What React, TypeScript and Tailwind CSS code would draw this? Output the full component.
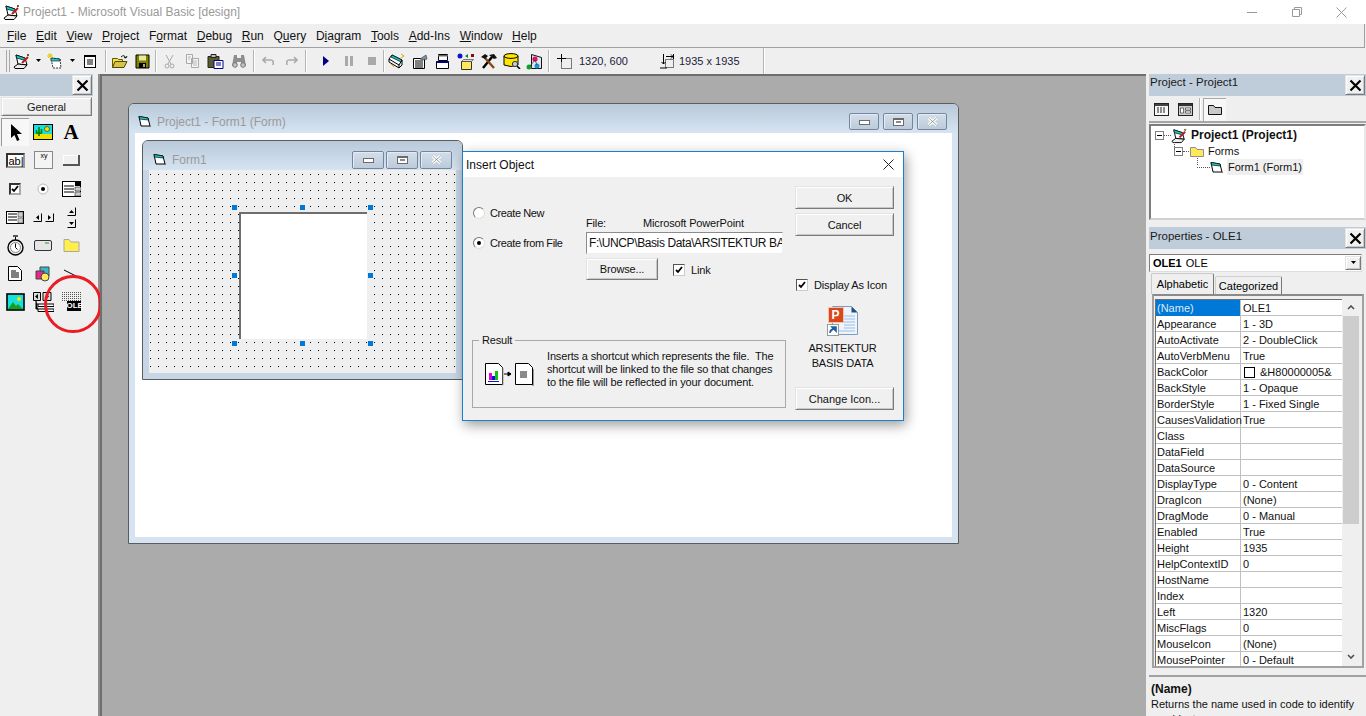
import type { ReactNode } from "react";

const raised =
  "bg-[#f0f0f0] border border-t-[#e3e3e3] border-l-[#e3e3e3] border-r-[#7a7a7a] border-b-[#7a7a7a] shadow-[inset_1px_1px_0_#fff,inset_-1px_-1px_0_#c8c8c8]";

const menus: [string, string, string][] = [
  ["", "F", "ile"],
  ["", "E", "dit"],
  ["", "V", "iew"],
  ["", "P", "roject"],
  ["F", "o", "rmat"],
  ["", "D", "ebug"],
  ["", "R", "un"],
  ["Q", "u", "ery"],
  ["D", "i", "agram"],
  ["", "T", "ools"],
  ["", "A", "dd-Ins"],
  ["", "W", "indow"],
  ["", "H", "elp"],
];

const props: [string, string][] = [
  ["(Name)", "OLE1"],
  ["Appearance", "1 - 3D"],
  ["AutoActivate", "2 - DoubleClick"],
  ["AutoVerbMenu", "True"],
  ["BackColor", "&H80000005&"],
  ["BackStyle", "1 - Opaque"],
  ["BorderStyle", "1 - Fixed Single"],
  ["CausesValidation", "True"],
  ["Class", ""],
  ["DataField", ""],
  ["DataSource", ""],
  ["DisplayType", "0 - Content"],
  ["DragIcon", "(None)"],
  ["DragMode", "0 - Manual"],
  ["Enabled", "True"],
  ["Height", "1935"],
  ["HelpContextID", "0"],
  ["HostName", ""],
  ["Index", ""],
  ["Left", "1320"],
  ["MiscFlags", "0"],
  ["MouseIcon", "(None)"],
  ["MousePointer", "0 - Default"],
];

function Ico({ w = 16, h = 16, children }: { w?: number; h?: number; children: ReactNode }) {
  return (
    <svg width={w} height={h} viewBox={`0 0 ${w} ${h}`} className="block shrink-0">
      {children}
    </svg>
  );
}

function FormIcon() {
  return (
    <Ico w={14} h={13}>
      <path d="M1 1.5 L10 3 L12 11 L3 11 Z" fill="#fff" stroke="#000" />
      <path d="M1 1.5 L10 3 L10.5 5 L1.5 4 Z" fill="#19d3d3" stroke="#000" strokeWidth=".7" />
      <path d="M13 11.5h-1" stroke="#777" />
    </Ico>
  );
}

function ProjectIcon({ size = 18 }: { size?: number }) {
  return (
    <svg width={size} height={size} viewBox="0 0 18 18" className="block shrink-0">
      <path d="M3 3 L12 6 L14 13 L5 12 Z" fill="#fff" stroke="#000" />
      <path d="M3 3 L12 6 L12.5 8.5 L3.5 6 Z" fill="#20c8c8" stroke="#000" strokeWidth=".7" />
      <path d="M1 15 L5 12 L14 13 L11 16.5 L2 16.5 Z" fill="#eee" stroke="#000" />
      <path d="M9 11 L15 5" stroke="#c01818" strokeWidth="2" />
      <path d="M15 2 l1 1 -1 1 -1-1z" fill="#ffe000" stroke="#000" strokeWidth=".6" />
    </svg>
  );
}

function Folder({ fill = "#ffe95a" }: { fill?: string }) {
  return (
    <Ico w={16} h={13}>
      <path d="M1.5 11.5V2.5h5l1.5 2h6.5v7z" fill={fill} stroke="#8f8f8f" />
    </Ico>
  );
}

function Tbtn({ w = 23, children }: { w?: number; children?: ReactNode }) {
  const cls = w === 23 ? "w-[23px]" : w === 24 ? "w-[24px]" : w === 26 ? "w-[26px]" : w === 28 ? "w-[28px]" : "w-[8px]";
  return <div className={`${cls} h-[22px] flex items-center justify-center shrink-0`}>{children}</div>;
}

function Sep({ cls }: { cls: string }) {
  return (
    <div className={`${cls} h-[22px] shrink-0 flex justify-center`}>
      <div className="w-[2px] h-full bg-[#b4b4b4] border-r border-white shrink-0" />
    </div>
  );
}

const Caret = () => (
  <Ico w={7} h={4}>
    <path d="M1 0h5L3.5 3z" fill="#000" />
  </Ico>
);

function ProjectExplorerIcon() {
  return (
    <Ico w={17} h={17}>
      <path d="M1 6l3-4 10 5-3 5z" fill="#fff" stroke="#000" />
      <path d="M4 2l10 5-1 2-10-5z" fill="#19c8c8" stroke="#000" strokeWidth=".7" />
      <path d="M1 6v3l10 6v-3M11 15l3-3V7" stroke="#000" fill="none" />
      <path d="M13 1l3 2-3 2M3 11l3 3" stroke="#e8a000" fill="none" />
    </Ico>
  );
}

function Toolbar() {
  return (
    <div className="h-[26px] bg-[#efefef] flex items-center pl-[6px] whitespace-nowrap shrink-0">
      <div className="w-[4px] h-[22px] border-x border-[#a8a8a8] shrink-0" />
      <Tbtn w={24}><ProjectIcon /></Tbtn>
      <Tbtn w={8}><Caret /></Tbtn>
      <Tbtn w={26}>
        <Ico w={17} h={17}>
          <path d="M4 5 L13 6 L14 15 L6 15 Z" fill="#fff" stroke="#333" strokeDasharray="2 1" />
          <path d="M4 5 L13 6 L13 8 L4 8 Z" fill="#1fd0d0" stroke="#000" strokeWidth=".6" />
          <path d="M3 0v5M0 3h6M1 1l4 4M5 1l-4 4" stroke="#e8c800" />
        </Ico>
      </Tbtn>
      <Tbtn w={8}><Caret /></Tbtn>
      <Tbtn w={28}>
        <Ico w={14} h={14}>
          <rect x="1.5" y="2.5" width="11" height="11" fill="#fff" stroke="#000" />
          <path d="M1 1h12v2H1z" fill="#000" />
          <path d="M4 6h6M4 8h6M4 10h6" stroke="#000" />
        </Ico>
      </Tbtn>
      <Sep cls="w-[4px]" />
      <Tbtn>
        <Ico w={17} h={15}>
          <path d="M1.5 13.5V4.5h5l1 1h4v2" fill="#ffe040" stroke="#5a5a00" />
          <path d="M1.5 13.5 L4 7.5 H16 L13 13.5 Z" fill="#d8c24a" stroke="#4a4a00" />
          <path d="M10 3 Q13 0 15 4 M15 4l1-2M15 4l-2-.5" stroke="#111" fill="none" />
        </Ico>
      </Tbtn>
      <Tbtn>
        <Ico w={15} h={15}>
          <path d="M1 1h13v13H1z" fill="#808000" stroke="#000" />
          <path d="M4 1.5h7v5H4z" fill="#e8e8a0" />
          <path d="M4 9h7v5H4z" fill="#000" />
          <path d="M8 10h2v3H8z" fill="#b0b060" />
        </Ico>
      </Tbtn>
      <Sep cls="w-[4px]" />
      <Tbtn>
        <Ico w={11} h={15}>
          <path d="M2 1l5 9M9 1L4 10" stroke="#a9a9a9" />
          <circle cx="3" cy="12" r="2" fill="none" stroke="#a9a9a9" />
          <circle cx="8" cy="12" r="2" fill="none" stroke="#a9a9a9" />
        </Ico>
      </Tbtn>
      <Tbtn>
        <Ico w={16} h={14}>
          <path d="M1.5.5h6v9h-6zM6.5 4.5h7v9h-7z" fill="#f4f4f4" stroke="#a9a9a9" />
          <path d="M8 7h4M8 9h4M8 11h4M3 3h3M3 5h2" stroke="#b8b8b8" />
        </Ico>
      </Tbtn>
      <Tbtn>
        <Ico w={17} h={15}>
          <path d="M1 2.5h11v11H1z" fill="#5a5a2a" stroke="#222" />
          <path d="M4 .5h5v3H4z" fill="#bbb" stroke="#222" />
          <path d="M7 6.5h9v8H7z" fill="#fff" stroke="#00008b" />
          <path d="M9 9h5M9 11h5" stroke="#00008b" />
        </Ico>
      </Tbtn>
      <Tbtn>
        <Ico w={16} h={14}>
          <path d="M3 1h3v3h4V1h3l2 11H10V8H6v4H1z" fill="#8e8e8e" />
          <circle cx="4" cy="11" r="2.3" fill="#c4c4c4" stroke="#777" />
          <circle cx="12" cy="11" r="2.3" fill="#c4c4c4" stroke="#777" />
        </Ico>
      </Tbtn>
      <Sep cls="w-[7px]" />
      <Tbtn>
        <Ico w={13} h={10}>
          <path d="M4 1L1 4l3 3M1 4h8q3 0 2 5" stroke="#aaa" strokeWidth="1.6" fill="none" />
        </Ico>
      </Tbtn>
      <Tbtn>
        <Ico w={13} h={10}>
          <path d="M9 1l3 3-3 3M12 4H4Q1 4 2 9" stroke="#aaa" strokeWidth="1.6" fill="none" />
        </Ico>
      </Tbtn>
      <Sep cls="w-[5px]" />
      <div className="w-[6px] shrink-0" />
      <Tbtn>
        <Ico w={6} h={10}>
          <path d="M0 0l6 5-6 5z" fill="#000080" />
        </Ico>
      </Tbtn>
      <Tbtn>
        <Ico w={8} h={10}>
          <path d="M0 0h3v10H0zM5 0h3v10H5z" fill="#a9a9a9" />
        </Ico>
      </Tbtn>
      <Tbtn>
        <div className="w-[8px] h-[8px] bg-[#a9a9a9]" />
      </Tbtn>
      <Sep cls="w-[2px]" />
      <Tbtn><ProjectExplorerIcon /></Tbtn>
      <Tbtn>
        <Ico w={16} h={15}>
          <path d="M1.5 4.5h11v10h-11z" fill="#fff" stroke="#000" />
          <path d="M3 7h8M3 9h8M3 11h8M3 13h8" stroke="#000" />
          <path d="M8 5l6-4 1 4-4 1z" fill="#7c8fa6" stroke="#333" strokeWidth=".6" />
        </Ico>
      </Tbtn>
      <Tbtn>
        <Ico w={15} h={15}>
          <path d="M3.5.5h9v6h-9z" fill="#fff" stroke="#000" />
          <path d="M3 1h10v1.5H3z" fill="#666" />
          <path d="M1.5 7.5h12v7h-12z" fill="#fff" stroke="#000" />
          <path d="M1.5 7h12v2h-12z" fill="#000080" />
        </Ico>
      </Tbtn>
      <Tbtn>
        <Ico w={17} h={17}>
          <circle cx="3" cy="3" r="2.5" fill="#1010d0" />
          <path d="M14 1h3v3h-3z" fill="#801010" />
          <path d="M8 3l3-2v4z" fill="#208020" />
          <path d="M4.5 8.5h10v8h-10z" fill="#ffe95a" stroke="#333" />
          <path d="M4.5 8.5l2-2h10l-2 2z" fill="#ddd" stroke="#333" strokeWidth=".6" />
        </Ico>
      </Tbtn>
      <Tbtn>
        <Ico w={17} h={16}>
          <path d="M3 15L12 4" stroke="#000" strokeWidth="2.4" />
          <path d="M14 15L5 5" stroke="#8b4513" strokeWidth="2.4" />
          <path d="M1 4l4-3 3 2-3 3zM9 2l5-1 3 4-3 1z" fill="#111" />
        </Ico>
      </Tbtn>
      <Tbtn>
        <Ico w={18} h={16}>
          <path d="M1 3v9q7 3 14 0V3z" fill="#ffe600" stroke="#000" />
          <ellipse cx="8" cy="3" rx="7" ry="2.4" fill="#ffe600" stroke="#000" />
          <circle cx="12" cy="11" r="2.6" fill="#ccc" stroke="#333" />
          <path d="M14 13l3 3" stroke="#000" strokeWidth="1.6" />
        </Ico>
      </Tbtn>
      <Tbtn>
        <Ico w={17} h={17}>
          <path d="M5.5 1.5l10 3v11h-10z" fill="#dfe6ee" stroke="#111" />
          <circle cx="9" cy="6" r="2.6" fill="#e0106a" />
          <circle cx="3" cy="14" r="2.5" fill="#10a030" />
          <circle cx="11" cy="13" r="2.5" fill="#2090d0" />
          <path d="M9 7L4 13M9 7l2 5" stroke="#333" strokeWidth=".7" />
        </Ico>
      </Tbtn>
      <Sep cls="w-[6px]" />
      <Tbtn w={24}>
        <Ico w={16} h={15}>
          <path d="M5.5 0v8M1 4.5h9" stroke="#000" />
          <rect x="5.5" y="4.5" width="10" height="10" fill="none" stroke="#000" strokeDasharray="1 1" />
        </Ico>
      </Tbtn>
      <span className="ml-[3px] w-[75px] text-[11px] text-[#1c1c3c]">1320, 600</span>
      <Tbtn w={24}>
        <Ico w={16} h={16}>
          <path d="M5.5 1v10M2 15h7M5.5 11l-2-2M5.5 11l2-2" stroke="#000" />
          <path d="M8 3.5h7M15 3.5l-2-2M15 3.5l-2 2M15.5 1v5" stroke="#000" />
          <rect x="7.5" y="6.5" width="8" height="8" fill="none" stroke="#000" strokeDasharray="1 1" />
        </Ico>
      </Tbtn>
      <span className="ml-[1px] w-[84px] text-[11px] text-[#1c1c3c]">1935 x 1935</span>
      <div className="w-[2px] h-[26px] bg-[#b4b4b4] border-r border-white" />
    </div>
  );
}

function CloseBox() {
  return (
    <div className={`${raised} w-[20px] h-[20px] flex items-center justify-center shrink-0`}>
      <Ico w={13} h={13}>
        <path d="M1.5 1.5l10 10M11.5 1.5l-10 10" stroke="#000" strokeWidth="2.2" />
      </Ico>
    </div>
  );
}

function Toolbox() {
  const cells: ReactNode[] = [
    <Ico w={12} h={17}><path d="M1 0v14l3.5-3 2.5 6 2.5-1-2.5-6H12z" fill="#000" /></Ico>,
    <Ico w={20} h={16}>
      <rect x=".5" y=".5" width="19" height="15" fill="#19e0e0" stroke="#000" />
      <circle cx="14" cy="5" r="2.5" fill="#ffe000" stroke="#000" strokeWidth=".5" />
      <path d="M1 10h18v5H1z" fill="#f0e000" />
      <path d="M6 3v9M3.5 6v3h5V5" stroke="#008000" strokeWidth="1.6" fill="none" />
    </Ico>,
    <span className="font-['Liberation_Serif',serif] font-bold text-[21px] leading-none text-black">A</span>,
    <div className="w-[19px] h-[15px] border-2 border-[#333] border-r-[#999] border-b-[#999] bg-white text-[11px] leading-[12px] pl-[1px] text-black whitespace-nowrap">ab|</div>,
    <div className="w-[19px] h-[18px] border border-[#8a8a8a] bg-[#f4f4f4] text-[7px] leading-[7px] pl-[6px] text-black">xy</div>,
    <div className="w-[17px] h-[11px] bg-[#f0f0f0] border-r-2 border-b-2 border-[#555] shadow-[inset_1px_1px_0_#fff]" />,
    <div className="w-[12px] h-[12px] border-2 border-[#333] border-r-[#aaa] border-b-[#aaa] bg-white flex items-center justify-center">
      <Ico w={8} h={8}><path d="M1 4l2 2 4-5" stroke="#000" strokeWidth="1.8" fill="none" /></Ico>
    </div>,
    <Ico w={12} h={12}><circle cx="6" cy="6" r="5" fill="#fff" stroke="#bbb" /><circle cx="6" cy="6" r="2" fill="#000" /></Ico>,
    <Ico w={19} h={16}>
      <rect x=".5" y=".5" width="18" height="15" fill="#fff" stroke="#000" />
      <path d="M2 5h10M2 8h10M2 11h10" stroke="#000" />
      <path d="M13 0h6v5h-6z" fill="#000" />
      <path d="M13 6h6v4h-6zM13 11h6v4h-6z" fill="#ccc" stroke="#000" strokeWidth=".5" />
    </Ico>,
    <Ico w={18} h={13}>
      <rect x=".5" y=".5" width="17" height="12" fill="#fff" stroke="#000" />
      <path d="M2 3h9M2 6h9M2 9h9" stroke="#000" />
      <path d="M12 1h5v5h-5zM12 7h5v5h-5z" fill="#ccc" stroke="#333" strokeWidth=".5" />
    </Ico>,
    <Ico w={21} h={9}>
      <path d="M.5.5h8v8h-8zM12.5.5h8v8h-8z" fill="#eee" />
      <path d="M8.5.5v8h-8M20.5.5v8h-8" stroke="#000" fill="none" />
      <path d="M6 2v5L3 4.5zM15 2v5l3-2.5z" fill="#000" />
    </Ico>,
    <Ico w={9} h={21}>
      <path d="M.5.5h8v8h-8zM.5 12.5h8v8h-8z" fill="#eee" />
      <path d="M8.5.5v8h-8M8.5 12.5v8h-8" stroke="#000" fill="none" />
      <path d="M2 6h5L4.5 3zM2 15h5l-2.5 3z" fill="#000" />
    </Ico>,
    <Ico w={17} h={22}>
      <circle cx="8.5" cy="13.5" r="7.5" fill="#eee" stroke="#000" strokeWidth="1.4" />
      <circle cx="8.5" cy="13.5" r="5" fill="#fff" stroke="#888" />
      <path d="M8.5 13.5V9.5M8.5 13.5l2 2" stroke="#000" />
      <path d="M6 1h5v2H6z" fill="#555" />
      <path d="M8.5 3v3" stroke="#000" />
    </Ico>,
    <Ico w={18} h={11}>
      <rect x=".5" y=".5" width="17" height="10" rx="1.5" fill="#e6e6e6" stroke="#333" />
      <path d="M11 3h4" stroke="#10a030" />
    </Ico>,
    <Ico w={17} h={15}>
      <path d="M1 13.5V1.5h5l2 2.5h8v9.5z" fill="#ffef4a" stroke="#a8a8a8" />
    </Ico>,
    <Ico w={14} h={15}>
      <path d="M.5.5h9l4 4v10H.5z" fill="#fff" stroke="#000" />
      <path d="M3 5h5M3 7h8M3 9h8M3 11h8" stroke="#000" />
    </Ico>,
    <Ico w={17} h={16}>
      <path d="M5 1h9v9H5z" fill="#39b8cc" stroke="#444" />
      <path d="M1 5h8v8H1z" fill="#e4288c" stroke="#444" />
      <circle cx="10" cy="11" r="4" fill="#ffe95a" stroke="#444" />
    </Ico>,
    <Ico w={16} h={9}><path d="M1 1l14 7" stroke="#000" /></Ico>,
    <Ico w={19} h={18}>
      <rect x="1" y="1" width="17" height="16" fill="#18e0e0" stroke="#000" strokeWidth="1.6" />
      <circle cx="13" cy="6" r="2" fill="#ffe000" />
      <path d="M2 16l5-7 3 4 2-2 5 5z" fill="#18a018" />
    </Ico>,
    <Ico w={21} h={20}>
      <path d="M.5.5h7v8h-7zM10 .5h8v8h-8z" fill="#ddd" stroke="#000" />
      <path d="M5 2v5L2 4.5zM13 2v5l3-2.5z" fill="#000" />
      <path d="M5 12h16v2.5H5zM5 17h16v2.5H5z" fill="#fff" stroke="#000" />
      <path d="M3 8v9h2M3 12h2" stroke="#000" />
    </Ico>,
    <div className="flex flex-col items-end w-[19px] h-[19px]">
      <div className="w-full h-[9px] bg-[conic-gradient(at_1px_1px,transparent_75%,#555_0)] bg-[size:2px_2px]" />
      <div className="w-[14px] h-[10px] bg-black text-white text-[8px] leading-[10px] font-bold text-center whitespace-nowrap">OLE</div>
    </div>,
  ];
  return (
    <div className="relative w-[100px] shrink-0 h-full bg-[#efefef] border-r-2 border-[#8e8e8e]">
      <div className="w-[93px] h-[22px] bg-[#bfcddb] flex justify-end items-center pr-[1px]">
        <CloseBox />
      </div>
      <div className={`${raised} ml-[1px] mt-[1px] w-[91px] h-[19px] flex items-center justify-center text-[11px] text-[#1a1a1a]`}>General</div>
      <div className="grid grid-cols-[28px_28px_28px] auto-rows-[28.3px] pl-[1px] pt-[2px]">
        {cells.map((c, i) => (
          <div
            key={i}
            className={`flex items-center justify-center ${i === 0 ? "bg-[#f7f7f7] border-l border-t border-[#999]" : ""}`}
          >
            {c}
          </div>
        ))}
      </div>
      {/* red marker round the OLE tool */}
      <div className="absolute left-[44px] top-[201px] w-[58px] h-[58px] rounded-full border-[3px] border-[#ea1c24]" />
    </div>
  );
}

function WinBtn({ big, kind }: { big?: boolean; kind: "min" | "max" | "close" }) {
  return (
    <div
      className={`${big ? "w-[32px] h-[18px]" : "w-[30px] h-[17px]"} rounded-[2px] border border-[#76859a] bg-gradient-to-b from-[#d3deea] to-[#bccada] shadow-[inset_1px_1px_0_#e4ebf2] flex items-center justify-center`}
    >
      {kind === "min" && <div className="w-[11px] h-[5px] bg-white border border-[#6b6b6b] mt-[2px]" />}
      {kind === "max" && <div className="w-[11px] h-[8px] bg-white border border-[#6b6b6b] border-t-2 flex items-center justify-center"><div className="w-[5px] h-[2px] bg-[#8a8a8a]" /></div>}
      {kind === "close" && (
        <Ico w={11} h={9}>
          <path d="M1.5 1l8 7M9.5 1l-8 7" stroke="#fff" strokeWidth="3" />
          <path d="M1.5 1l8 7M9.5 1l-8 7" stroke="#7a7a7a" strokeWidth=".7" />
        </Ico>
      )}
    </div>
  );
}

function MdiTitle({ title, big, cls }: { title: string; big?: boolean; cls: string }) {
  return (
    <div className={`${cls} flex items-center rounded-t-[5px] bg-gradient-to-b from-[#b9c9d9] to-[#d6e4f2]`}>
      <FormIcon />
      <span className="ml-[5px] text-[#9a9a9a] flex-1">{title}</span>
      <div className={`flex ${big ? "gap-[2px]" : "gap-[4px]"}`}>
        <WinBtn big={big} kind="min" />
        <WinBtn big={big} kind="max" />
        <WinBtn big={big} kind="close" />
      </div>
    </div>
  );
}

function Handle({ cls }: { cls: string }) {
  return <div className={`absolute w-[5px] h-[5px] bg-[#0078d7] ${cls}`} />;
}

function Check({ label, cls }: { label: string; cls: string }) {
  return (
    <div className={`${cls} flex items-center gap-[6px] whitespace-nowrap`}>
      <div className="w-[12px] h-[12px] bg-white border border-[#555] border-r-[#ccc] border-b-[#ccc] flex items-center justify-center shrink-0">
        <Ico w={8} h={8}><path d="M1 4l2 2 4-5" stroke="#000" strokeWidth="1.8" fill="none" /></Ico>
      </div>
      <span>{label}</span>
    </div>
  );
}

function Radio({ label, on, cls }: { label: string; on?: boolean; cls: string }) {
  return (
    <div className={`${cls} flex items-center gap-[5px] whitespace-nowrap tracking-[-0.4px]`}>
      <div className="w-[12px] h-[12px] rounded-full bg-white border border-[#777] border-r-[#ddd] border-b-[#ddd] flex items-center justify-center shrink-0">
        {on && <div className="w-[4px] h-[4px] rounded-full bg-black" />}
      </div>
      <span>{label}</span>
    </div>
  );
}

function DialogBtn({ cls, children }: { cls: string; children: ReactNode }) {
  return <div className={`${raised} ${cls} flex items-center justify-center`}>{children}</div>;
}

function PptIcon() {
  return (
    <div className="relative w-[32px] h-[31px]">
      <Ico w={32} h={31}>
        <path d="M5.5 1.5h19l6 6v22h-25z" fill="#eef4fb" stroke="#7d9cc0" />
        <path d="M24.5 1.5v6h6z" fill="#234f80" />
        <path d="M17 11h11M17 14h11M17 17h11M17 20h11M17 23h11M12 26h16" stroke="#9cc0e4" />
      </Ico>
      <div className="absolute left-[1px] top-[2px] w-[16px] h-[16px] bg-[#d9481c] border border-[#f5c3a8] text-white font-bold text-[12px] leading-[14px] text-center">P</div>
      <div className="absolute left-0 bottom-0 w-[12px] h-[12px] bg-white border border-[#999] flex items-center justify-center">
        <Ico w={8} h={8}><path d="M1 7q0-4 4-4M3 1h4v4z" stroke="#1f5fa8" strokeWidth="1.6" fill="#1f5fa8" /></Ico>
      </div>
    </div>
  );
}

function InsertObject() {
  return (
    <div className="absolute left-[360px] top-[75px] w-[442px] h-[270px] bg-[#f0f0f0] border border-[#1b7fcc] shadow-[2px_4px_12px_rgba(0,0,0,0.4)] flex flex-col text-[#111] text-[11px] tracking-[-0.15px]">
      <div className="h-[25px] bg-white flex items-center justify-between pl-[3px] pr-[9px] shrink-0">
        <span className="text-[12px] tracking-normal">Insert Object</span>
        <Ico w={11} h={11}><path d="M.5.5l10 10M10.5.5l-10 10" stroke="#222" /></Ico>
      </div>
      <div className="flex flex-1">
        <div className="w-[332px] pl-[9px] shrink-0 flex flex-col">
          <div className="flex h-[161px]">
            <div className="w-[114px] pl-[1px] pt-[28px]">
              <Radio label="Create New" cls="h-[16px]" />
              <Radio on label="Create from File" cls="h-[16px] mt-[14px]" />
            </div>
            <div className="w-[200px] pt-[38px]">
              <div className="flex h-[16px] items-center">
                <span className="w-[57px]">File:</span>
                <span>Microsoft PowerPoint</span>
              </div>
              <div className="w-[197px] h-[22px] mt-[1px] bg-white border border-[#8c8c8c] border-r-[#eee] border-b-[#eee] pl-[2px] flex items-center overflow-hidden whitespace-nowrap text-[12px] tracking-[-0.4px]">
                F:\UNCP\Basis Data\ARSITEKTUR BA
              </div>
              <div className="flex items-center mt-[4px]">
                <DialogBtn cls="w-[72px] h-[22px]">Browse...</DialogBtn>
                <Check label="Link" cls="ml-[15px] mt-[1px]" />
              </div>
            </div>
          </div>
          {/* group box */}
          <div className="relative w-[314px] h-[68px] mt-[2px] border border-[#a8a8a8] flex items-start pt-[9px]">
            <span className="absolute left-[6px] -top-[9px] bg-[#f0f0f0] px-[3px] leading-[16px]">Result</span>
            <div className="ml-[11px] mt-[12px] w-[63px] shrink-0">
              <Ico w={52} h={24}>
                <path d="M1.5 1.5h13l4 4v17h-17z" fill="#fff" stroke="#000" />
                <path d="M18 23h1V6" stroke="#999" />
                <path d="M5 18V11h3v7z" fill="#e000e0" />
                <path d="M8 18V14h3v4z" fill="#1010e0" />
                <path d="M11 18V9h3v9z" fill="#10c010" />
                <path d="M4 19.5h11" stroke="#1010e0" />
                <path d="M20 12h7M27 12l-3-2v4z" stroke="#000" fill="#000" />
                <path d="M31.5 1.5h13l4 4v17h-17z" fill="#fff" stroke="#000" />
                <path d="M48.5 23.5h1V7" stroke="#999" />
                <rect x="36" y="9" width="7" height="7" fill="#8a8a8a" />
              </Ico>
            </div>
            <div className="leading-[13px] whitespace-nowrap">
              <div>Inserts a shortcut which represents the file.&nbsp; The</div>
              <div>shortcut will be linked to the file so that changes</div>
              <div>to the file will be reflected in your document.</div>
            </div>
          </div>
        </div>
        <div className="w-[99px] shrink-0 flex flex-col">
          <DialogBtn cls="h-[23px] mt-[9px]">OK</DialogBtn>
          <DialogBtn cls="h-[23px] mt-[4px]">Cancel</DialogBtn>
          <Check label="Display As Icon" cls="mt-[41px] ml-[1px] h-[16px]" />
          <div className="flex justify-center mt-[12px] pr-[4px]">
            <PptIcon />
          </div>
          <div className="text-center leading-[15px] mt-[5px] pr-[4px]">
            <div>ARSITEKTUR</div>
            <div>BASIS DATA</div>
          </div>
          <DialogBtn cls="h-[23px] mt-[16px] tracking-normal">Change Icon...</DialogBtn>
        </div>
      </div>
    </div>
  );
}

function ExpBox() {
  return (
    <div className="w-[9px] h-[9px] border border-[#808080] bg-white flex items-center justify-center shrink-0">
      <div className="w-[5px] h-[1px] bg-black" />
    </div>
  );
}

function ProjectPanel() {
  return (
    <div className="flex flex-col">
      <div className="h-[22px] bg-[#bfcddb] flex items-start justify-between pl-[1px] pr-[1px]">
        <span className="text-[#1a1a1a] text-[11.5px]">Project - Project1</span>
        <div className="mt-[1px]"><CloseBox /></div>
      </div>
      <div className="h-[26px] mt-[1px] flex items-center border-b-2 border-[#a6a6a6]">
        <div className="w-[24px] flex justify-center">
          <Ico w={15} h={13}>
            <rect x=".5" y=".5" width="14" height="12" fill="#f8f8f8" stroke="#222" />
            <path d="M1 1h13v2H1z" fill="#444" />
            <path d="M3 5h9M3 7h9M3 9h9" stroke="#222" strokeDasharray="2 1" />
          </Ico>
        </div>
        <div className="w-[24px] flex justify-center">
          <Ico w={15} h={13}>
            <rect x=".5" y=".5" width="14" height="12" fill="#ccc" stroke="#222" />
            <path d="M1 1h13v2H1z" fill="#333" />
            <path d="M2.5 5h3v5h-3zM7.5 5h5v2h-5zM7.5 8h5v2h-5z" fill="#fff" stroke="#222" strokeWidth=".6" />
          </Ico>
        </div>
        <div className="ml-[2px] w-[2px] h-[22px] bg-[#b4b4b4] border-r border-white" />
        <div className="ml-[2px] w-[23px] h-[23px] bg-[#f7f7f7] border-l border-t border-[#aaa] flex items-center justify-center">
          <Ico w={16} h={13}>
            <path d="M1.5 11.5V2.5h5l1.5 2h6.5v7z" fill="#c9c9c9" stroke="#111" />
          </Ico>
        </div>
      </div>
      <div className="relative h-[96px] mt-[1px] bg-white border-2 border-[#7e7e7e] border-r-[#e8e8e8] border-b-[#d0d0d0] pt-[1px] pl-[4px] leading-[16px] text-[#111] text-[11px] whitespace-nowrap">
        <div className="flex items-center h-[16px]">
          <ExpBox />
          <div className="w-[7px] border-t border-dotted border-[#555]" />
          <ProjectIcon size={17} />
          <span className="ml-[3px] font-bold text-[12px]">Project1 (Project1)</span>
        </div>
        <div className="flex items-center h-[16px] pl-[19px]">
          <ExpBox />
          <div className="w-[6px] border-t border-dotted border-[#555]" />
          <Folder />
          <span className="ml-[3px]">Forms</span>
        </div>
        <div className="flex items-center h-[16px] pl-[42px]">
          <div className="w-[13px] border-t border-dotted border-[#555]" />
          <FormIcon />
          <span className="ml-[3px] bg-[#efefef] px-[1px]">Form1 (Form1)</span>
        </div>
        <div className="absolute left-[23px] top-[16px] h-[7px] border-l border-dotted border-[#555]" />
        <div className="absolute left-[46px] top-[32px] h-[7px] border-l border-dotted border-[#555]" />
      </div>
    </div>
  );
}

function PropertiesPanel() {
  return (
    <div className="flex flex-col mt-[7px] text-[11px]">
      <div className="h-[22px] bg-[#bfcddb] flex items-start justify-between pl-[1px] pr-[1px]">
        <span className="mt-[1px] text-[#1a1a1a] text-[11.5px]">Properties - OLE1</span>
        <div className="mt-[1px]"><CloseBox /></div>
      </div>
      <div className="h-[18px] mt-[5px] w-[213px] bg-white border border-[#7e7e7e] border-r-[#ddd] border-b-[#ddd] flex items-center pl-[3px]">
        <b className="font-bold">OLE1</b>
        <span className="ml-[4px] flex-1">OLE</span>
        <div className={`${raised} w-[16px] h-[14px] flex items-center justify-center`}><Caret /></div>
      </div>
      <div className="h-[22px] flex items-end pl-[2px] whitespace-nowrap">
        <div className="h-[21px] w-[63px] bg-[#efefef] border border-b-0 border-[#c9c9c9] border-r-[#777] flex items-center justify-center rounded-t-[2px]">Alphabetic</div>
        <div className="ml-[1px] h-[18px] w-[67px] bg-[#efefef] border border-b-0 border-[#d0d0d0] border-r-[#777] flex items-center justify-center rounded-t-[2px]">Categorized</div>
      </div>
      <div className="ml-[3px] w-[212px] h-[374px] border-2 border-[#a2a2a2] border-t-[#8a8a8a] pt-[3px] pl-[1px] flex">
        <div className="w-[187px] shrink-0 border-l border-t border-[#6e6e6e] bg-white overflow-hidden">
          {props.map(([k, v], i) => (
            <div key={k} className="grid grid-cols-[85px_1fr] h-[16px] border-b border-[#c0c0c0] leading-[16px]">
              <div className={`pl-[1px] border-r border-[#c0c0c0] whitespace-nowrap ${i === 0 ? "bg-[#0078d7] text-[#dfe9f3]" : "text-[#111]"}`}>{k}</div>
              <div className="pl-[2px] flex items-center text-[#111] whitespace-nowrap">
                {k === "BackColor" && <div className="w-[11px] h-[11px] bg-white border border-black mr-[5px] ml-[1px]" />}
                {v}
              </div>
            </div>
          ))}
        </div>
        <div className="w-[16px] ml-[1px] bg-[#efefef] flex flex-col">
          <div className="h-[17px] flex items-center justify-center">
            <Ico w={8} h={5}><path d="M1 4l3-3 3 3" stroke="#505050" strokeWidth="1.6" fill="none" /></Ico>
          </div>
          <div className="h-[208px] bg-[#cdcdcd]" />
          <div className="flex-1 flex items-end justify-center pb-[7px]">
            <Ico w={8} h={5}><path d="M1 1l3 3 3-3" stroke="#505050" strokeWidth="1.6" fill="none" /></Ico>
          </div>
        </div>
      </div>
      <div className="mt-[7px] border-t-2 border-[#a2a2a2] pl-[2px] pt-[5px] leading-[15px] text-[#111] h-[60px] whitespace-nowrap">
        <div className="font-bold text-[12px]">(Name)</div>
        <div>Returns the name used in code to identify</div>
        <div>an object.</div>
      </div>
    </div>
  );
}

export default function App() {
  return (
    <div className="w-[1366px] h-[716px] overflow-hidden flex flex-col bg-[#efefef] font-['Liberation_Sans',sans-serif] text-[12px] leading-[16px]">
      <div className="h-[24px] bg-white flex items-center pl-[3px] shrink-0">
        <ProjectIcon />
        <span className="ml-[2px] text-[#9a9a9a]">Project1 - Microsoft Visual Basic [design]</span>
        <div className="flex ml-auto pr-[2px]">
          <div className="w-[45px] flex justify-center">
            <Ico w={10} h={10}><path d="M0 5.5h10" stroke="#999" /></Ico>
          </div>
          <div className="w-[45px] flex justify-center">
            <Ico w={10} h={10}><path d="M2.5 2.5V.5h7v7h-2M.5 2.5h7v7h-7z" stroke="#999" fill="none" /></Ico>
          </div>
          <div className="w-[45px] flex justify-center">
            <Ico w={11} h={11}><path d="M.5.5l10 10M10.5.5l-10 10" stroke="#999" /></Ico>
          </div>
        </div>
      </div>
      <div className="h-[24px] flex items-center gap-[9.7px] pl-[7px] border-b border-r border-[#a0a0a0] mr-[1px] text-[#111] shrink-0">
        {menus.map(([a, b, c]) => (
          <span key={a + b + c}>
            {a}
            <u>{b}</u>
            {c}
          </span>
        ))}
      </div>
      <Toolbar />
      <div className="flex flex-1 min-h-0">
        <Toolbox />
        <div className="relative flex-1 bg-[#ababab] border-t-2 border-l-2 border-[#6e6e6e]">
          <div className="absolute left-[26px] top-[27px] w-[831px] h-[441px] border border-[#5c5c5c] rounded-t-[6px] bg-[#d6e4f2] flex flex-col">
            <MdiTitle title="Project1 - Form1 (Form)" cls="h-[29px] pl-[9px] pr-[11px] pt-[6px]" />
            <div className="relative flex-1 mx-[6px] mb-[6px] bg-white">
              <div className="absolute left-[7px] top-[7px] w-[321px] h-[240px] border border-[#5c5c5c] rounded-t-[6px] bg-[#c6d6e6] flex flex-col">
                <MdiTitle title="Form1" big cls="h-[29px] pl-[10px] pr-[10px] pt-[8px]" />
                <div className="relative flex-1 mx-[6px] mb-[6px] bg-[#efefef] bg-[conic-gradient(at_1px_1px,transparent_75%,#000_0)] bg-[size:8px_8px] bg-[position:1px_4px]">
                  <div className="absolute left-[90px] top-[42px] w-[128px] h-[127px] bg-white border-t-2 border-l-2 border-[#6e6e6e]" />
                  <Handle cls="left-[83px] top-[35px]" />
                  <Handle cls="left-[151px] top-[35px]" />
                  <Handle cls="left-[219px] top-[35px]" />
                  <Handle cls="left-[83px] top-[103px]" />
                  <Handle cls="left-[219px] top-[103px]" />
                  <Handle cls="left-[83px] top-[171px]" />
                  <Handle cls="left-[151px] top-[171px]" />
                  <Handle cls="left-[219px] top-[171px]" />
                </div>
              </div>
            </div>
          </div>
          <InsertObject />
        </div>
        <div className="w-[220px] shrink-0 pl-[3px] bg-[#efefef]">
          <ProjectPanel />
          <PropertiesPanel />
        </div>
      </div>
    </div>
  );
}
